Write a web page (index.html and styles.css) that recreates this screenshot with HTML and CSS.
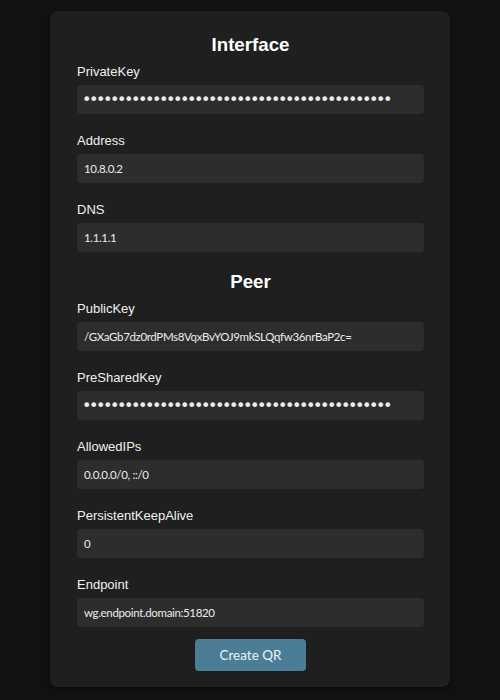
FILE: index.html
```html
<!DOCTYPE html>
<html lang="en">
<head>
<meta charset="utf-8">
<title>WireGuard QR</title>
<link rel="stylesheet" href="styles.css">
</head>
<body>
<main class="card">
  <section class="group">
    <h3 class="group-title">Interface</h3>
    <div class="field">
      <label class="label" for="pk">PrivateKey</label>
      <input class="input input-secret" id="pk" type="password" value="aBcDeFgHiJkLmNoPqRsTuVwXyZ0123456789abcdefg=">
    </div>
    <div class="field">
      <label class="label" for="addr">Address</label>
      <input class="input" id="addr" type="text" value="10.8.0.2">
    </div>
    <div class="field">
      <label class="label" for="dns">DNS</label>
      <input class="input" id="dns" type="text" value="1.1.1.1">
    </div>
  </section>
  <section class="group">
    <h3 class="group-title">Peer</h3>
    <div class="field">
      <label class="label" for="pub">PublicKey</label>
      <input class="input" id="pub" type="text" value="/GXaGb7dz0rdPMs8VqxBvYOJ9mkSLQqfw36nrBaP2c=">
    </div>
    <div class="field">
      <label class="label" for="psk">PreSharedKey</label>
      <input class="input input-secret" id="psk" type="password" value="aBcDeFgHiJkLmNoPqRsTuVwXyZ0123456789abcdefg=">
    </div>
    <div class="field">
      <label class="label" for="ips">AllowedIPs</label>
      <input class="input" id="ips" type="text" value="0.0.0.0/0, ::/0">
    </div>
    <div class="field">
      <label class="label" for="ka">PersistentKeepAlive</label>
      <input class="input" id="ka" type="text" value="0">
    </div>
    <div class="field">
      <label class="label" for="ep">Endpoint</label>
      <input class="input" id="ep" type="text" value="wg.endpoint.domain:51820">
    </div>
  </section>
  <div class="actions">
    <button class="btn" type="button">Create QR</button>
  </div>
</main>
</body>
</html>
```
FILE: styles.css
```css
html, body {
  margin: 0;
  padding: 0;
}
body {
  background: #121212;
  font-family: "Liberation Sans", Arial, sans-serif;
  color: #f2f2f2;
  padding-top: 11px;
  min-height: 700px;
  box-sizing: border-box;
}
.card {
  width: 400px;
  box-sizing: border-box;
  margin: 0 auto;
  background: #1f1f1f;
  border-radius: 8px;
  padding: 23px 26px 16px 27px;
  box-shadow: 0 2px 8px rgba(0, 0, 0, 0.5);
}
.group-title {
  margin: 0 0 8px;
  font-size: 18.72px;
  line-height: 22px;
  font-weight: bold;
  text-align: center;
  color: #ffffff;
}
.field {
  margin-bottom: 19px;
}
.group:last-of-type .field:last-child {
  margin-bottom: 12px;
}
.label {
  display: block;
  font-size: 13px;
  line-height: 15px;
  margin-bottom: 6px;
  color: #f0f0f0;
}
.input {
  display: block;
  width: 100%;
  box-sizing: border-box;
  height: 29px;
  border: none;
  outline: none;
  border-radius: 4px;
  background: #2d2d2d;
  color: #ececec;
  padding: 0 7px;
  font-family: Lato, "Noto Sans", sans-serif;
  font-size: 11.5px;
  letter-spacing: -0.35px;
}
.input-secret {
  font-family: "DejaVu Sans", sans-serif;
  font-size: 16px;
  letter-spacing: -2.44px;
  padding-left: 5px;
}
.actions {
  display: flex;
  justify-content: center;
}
.btn {
  width: 111px;
  height: 32px;
  border: none;
  border-radius: 4px;
  background: #4b7d96;
  color: #eef3f6;
  font-family: Lato, "Noto Sans", sans-serif;
  font-size: 13.5px;
  cursor: pointer;
}
```
